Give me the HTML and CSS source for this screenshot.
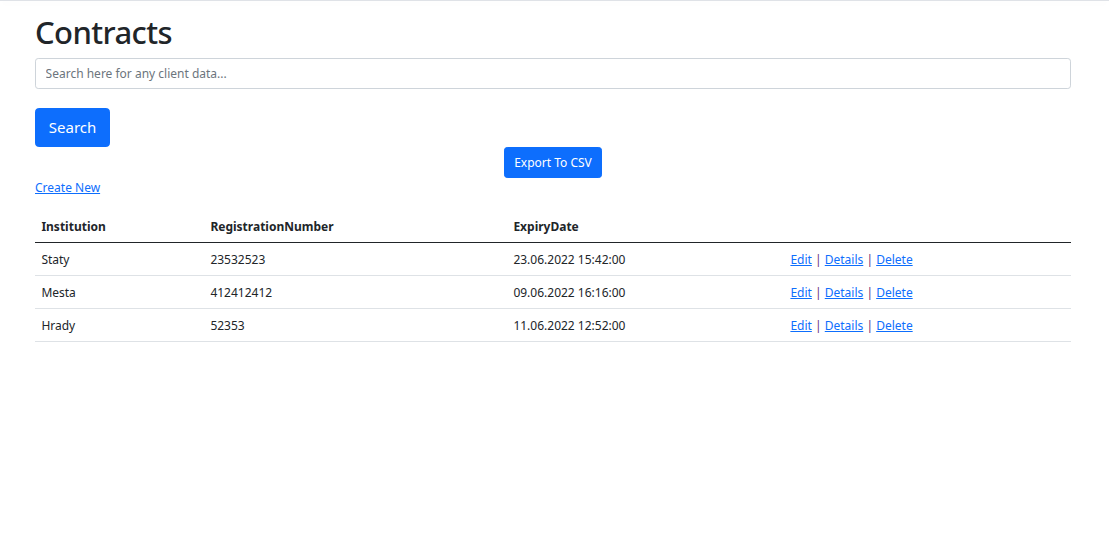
FILE: index.html
```html
<!DOCTYPE html>
<html lang="en">
<head>
<meta charset="utf-8">
<title>Contracts</title>
<link rel="stylesheet" href="styles.css">
</head>
<body>
<div class="topbar"></div>
<main class="page">
  <h1 class="title">Contracts</h1>
  <form class="search-form">
    <input class="search-input" type="text" placeholder="Search here for any client data...">
    <button class="btn btn-lg" type="button">Search</button>
  </form>
  <div class="export-row">
    <button class="btn btn-md" type="button">Export To CSV</button>
  </div>
  <p class="create"><a class="link" href="#">Create New</a></p>
  <table class="grid">
    <colgroup>
      <col class="c1"><col class="c2"><col class="c3"><col class="c4">
    </colgroup>
    <thead>
      <tr><th>Institution</th><th>RegistrationNumber</th><th>ExpiryDate</th><th></th></tr>
    </thead>
    <tbody>
      <tr><td>Staty</td><td>23532523</td><td>23.06.2022 15:42:00</td><td><a class="link" href="#">Edit</a> <span class="sep">|</span> <a class="link" href="#">Details</a> <span class="sep">|</span> <a class="link" href="#">Delete</a></td></tr>
      <tr><td>Mesta</td><td>412412412</td><td>09.06.2022 16:16:00</td><td><a class="link" href="#">Edit</a> <span class="sep">|</span> <a class="link" href="#">Details</a> <span class="sep">|</span> <a class="link" href="#">Delete</a></td></tr>
      <tr><td>Hrady</td><td>52353</td><td>11.06.2022 12:52:00</td><td><a class="link" href="#">Edit</a> <span class="sep">|</span> <a class="link" href="#">Details</a> <span class="sep">|</span> <a class="link" href="#">Delete</a></td></tr>
    </tbody>
  </table>
</main>
</body>
</html>
```

FILE: styles.css
```css
* { box-sizing: border-box; }
html, body { margin: 0; padding: 0; background: #fff; }
body {
  font-family: "Noto Sans", "Open Sans", sans-serif;
  font-size: 12px;
  line-height: 19.2px;
  color: #212529;
}
.topbar {
  height: 1px;
  background: #dfe2e7;
  box-shadow: 0 2px 8px rgba(0, 0, 0, 0.06);
}
.page {
  padding: 0 38px 0 35px;
}
.title {
  margin: 12px 0 6.5px;
  font-size: 31px;
  line-height: 38.4px;
  font-weight: 500;
  letter-spacing: -0.6px;
}
.search-form {
  display: flex;
  flex-direction: column;
  align-items: flex-start;
  gap: 19px;
  margin: 0;
}
.search-input {
  width: 100%;
  height: 31px;
  padding: 0 9.6px;
  border: 1px solid #ced4da;
  border-radius: 3.2px;
  font-family: inherit;
  font-size: 12px;
  color: #212529;
  background: #fff;
  outline: none;
}
.search-input::placeholder { color: #6c757d; opacity: 1; }
.btn {
  font-family: inherit;
  color: #fff;
  background: #0d6efd;
  border: 1px solid #0d6efd;
  cursor: pointer;
}
.btn-lg {
  height: 39px;
  padding: 0 12.8px;
  font-size: 15px;
  line-height: 24px;
  border-radius: 3.8px;
}
.btn-md {
  height: 31px;
  padding: 0 9.6px;
  font-size: 12px;
  line-height: 19.2px;
  border-radius: 3.2px;
}
.export-row {
  display: flex;
  justify-content: center;
}
.create {
  margin: 0 0 12.5px;
  line-height: 20px;
}
.link {
  color: #0d6efd;
  text-decoration: underline;
}
.sep { color: #6a2b78; }
.grid {
  width: 100%;
  table-layout: fixed;
  border-collapse: collapse;
}
.c1 { width: 169px; }
.c2 { width: 303px; }
.c3 { width: 277px; }
.c4 { width: 287px; }
.grid th, .grid td {
  text-align: left;
  padding: 6.5px 6.4px;
  line-height: 19px;
  border-bottom: 1px solid #dee2e6;
  vertical-align: top;
  white-space: nowrap;
}
.grid th {
  font-weight: 700;
  border-bottom: 1.5px solid #212529;
}
```
